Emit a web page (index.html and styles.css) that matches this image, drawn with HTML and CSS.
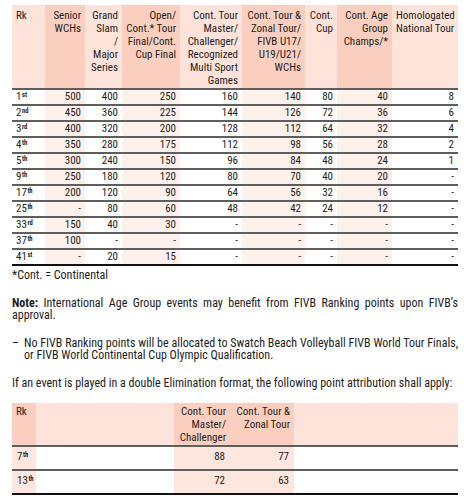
FILE: index.html
```html
<!DOCTYPE html>
<html>
<head>
<meta charset="utf-8">
<link rel="stylesheet" href="styles.css">
</head>
<body>
<div class="page">
  <table class="points main">
    <colgroup>
      <col class="w-rk"><col class="w-sen"><col class="w-gs"><col class="w-open"><col class="w-master"><col class="w-zonal"><col class="w-cup"><col class="w-age"><col class="w-nat">
    </colgroup>
    <thead>
      <tr>
        <th class="left light">Rk</th>
        <th class="dark">Senior<br>WCHs</th>
        <th class="light">Grand<br>Slam<br>/<br>Major<br>Series</th>
        <th class="dark">Open/<br>Cont.* Tour<br>Final/Cont.<br>Cup Final</th>
        <th class="light">Cont. Tour<br>Master/<br>Challenger/<br>Recognized<br>Multi Sport<br>Games</th>
        <th class="dark">Cont. Tour &amp;<br>Zonal Tour/<br>FIVB U17/<br>U19/U21/<br>WCHs</th>
        <th class="light">Cont.<br>Cup</th>
        <th class="dark">Cont. Age<br>Group<br>Champs/*</th>
        <th class="light">Homologated<br>National Tour</th>
      </tr>
    </thead>
    <tbody>
      <tr><td class="left">1<sup>st</sup></td><td class="p">500</td><td>400</td><td class="p">250</td><td>160</td><td class="p">140</td><td>80</td><td class="p">40</td><td>8</td></tr>
      <tr><td class="left">2<sup>nd</sup></td><td class="p">450</td><td>360</td><td class="p">225</td><td>144</td><td class="p">126</td><td>72</td><td class="p">36</td><td>6</td></tr>
      <tr><td class="left">3<sup>rd</sup></td><td class="p">400</td><td>320</td><td class="p">200</td><td>128</td><td class="p">112</td><td>64</td><td class="p">32</td><td>4</td></tr>
      <tr><td class="left">4<sup>th</sup></td><td class="p">350</td><td>280</td><td class="p">175</td><td>112</td><td class="p">98</td><td>56</td><td class="p">28</td><td>2</td></tr>
      <tr><td class="left">5<sup>th</sup></td><td class="p">300</td><td>240</td><td class="p">150</td><td>96</td><td class="p">84</td><td>48</td><td class="p">24</td><td>1</td></tr>
      <tr><td class="left">9<sup>th</sup></td><td class="p">250</td><td>180</td><td class="p">120</td><td>80</td><td class="p">70</td><td>40</td><td class="p">20</td><td>-</td></tr>
      <tr><td class="left">17<sup>th</sup></td><td class="p">200</td><td>120</td><td class="p">90</td><td>64</td><td class="p">56</td><td>32</td><td class="p">16</td><td>-</td></tr>
      <tr><td class="left">25<sup>th</sup></td><td class="p">-</td><td>80</td><td class="p">60</td><td>48</td><td class="p">42</td><td>24</td><td class="p">12</td><td>-</td></tr>
      <tr><td class="left">33<sup>rd</sup></td><td class="p">150</td><td>40</td><td class="p">30</td><td>-</td><td class="p">-</td><td>-</td><td class="p">-</td><td>-</td></tr>
      <tr><td class="left">37<sup>th</sup></td><td class="p">100</td><td>-</td><td class="p">-</td><td>-</td><td class="p">-</td><td>-</td><td class="p">-</td><td>-</td></tr>
      <tr class="last"><td class="left">41<sup>st</sup></td><td class="p">-</td><td>20</td><td class="p">15</td><td>-</td><td class="p">-</td><td>-</td><td class="p">-</td><td>-</td></tr>
    </tbody>
  </table>

  <p class="footnote">*Cont. = Continental</p>

  <div class="note"><span class="jline"><b>Note:</b> International Age Group events may benefit from FIVB Ranking points upon FIVB’s</span><span class="rest">approval.</span></div>

  <div class="dash-item"><span class="dash">–</span><div class="dash-text"><span class="jline">No FIVB Ranking points will be allocated to Swatch Beach Volleyball FIVB World Tour Finals,</span><span class="rest">or FIVB World Continental Cup Olympic Qualification.</span></div></div>

  <p class="intro">If an event is played in a double Elimination format, the following point attribution shall apply:</p>

  <table class="points second">
    <colgroup>
      <col class="w2-rk"><col class="w2-blank"><col class="w2-master"><col class="w2-zonal"><col class="w2-rest">
    </colgroup>
    <thead>
      <tr>
        <th class="left dark">Rk</th>
        <th class="light"></th>
        <th class="dark">Cont. Tour<br>Master/<br>Challenger</th>
        <th class="dark">Cont. Tour &amp;<br>Zonal Tour</th>
        <th class="light"></th>
      </tr>
    </thead>
    <tbody>
      <tr><td class="left q">7<sup>th</sup></td><td></td><td class="q">88</td><td class="q">77</td><td></td></tr>
      <tr class="last"><td class="left q">13<sup>th</sup></td><td></td><td class="q">72</td><td class="q">63</td><td></td></tr>
    </tbody>
  </table>
</div>
</body>
</html>
```

FILE: styles.css
```css
html, body {
  margin: 0;
  padding: 0;
  background: #ffffff;
}

body {
  font-family: "Roboto Condensed", "Roboto", "Liberation Sans", sans-serif;
  font-stretch: condensed;
  font-size: 12px;
  color: #1d1d1b;
}

.page {
  padding: 5px 12px 0 12px;
  width: 446px;
}

.points {
  border-collapse: collapse;
  table-layout: fixed;
  width: 446px;
  font-size: 11px;
}

.points th {
  font-weight: normal;
  text-align: right;
  vertical-align: top;
  white-space: nowrap;
  line-height: 13px;
  padding: 4px 4px 1px 4px;
  border-bottom: 2px solid #5e5e5e;
}

.points td {
  text-align: right;
  line-height: 14px;
  padding: 0 4px;
  border-bottom: 2px solid #5e5e5e;
}

.points tr.last td {
  border-bottom: 2px solid #111;
}

.points .left {
  text-align: left;
}

.points th.light { background: #fde3d9; }
.points th.dark { background: #fbcfbf; }
.points td.p { background: #fef0ea; }

sup {
  font-size: 6.5px;
  line-height: 1;
  vertical-align: 3px;
  font-weight: bold;
  margin-left: 0.5px;
}

.w-rk { width: 33px; }
.w-sen { width: 40px; }
.w-gs { width: 37px; }
.w-open { width: 58px; }
.w-master { width: 62px; }
.w-zonal { width: 63px; }
.w-cup { width: 32px; }
.w-age { width: 55px; }
.w-nat { width: 66px; }

.footnote {
  margin: 3px 0 0;
  line-height: 13px;
}

.note {
  margin: 15px 0 0;
  line-height: 12px;
}

.jline {
  display: block;
  text-align: justify;
  text-align-last: justify;
}

.rest {
  display: block;
}

.note b {
  font-weight: bold;
}

.dash-item {
  display: flex;
  margin-top: 16px;
  line-height: 12px;
}

.dash-item .dash {
  flex: 0 0 12px;
}

.dash-text {
  flex: 1;
}

.intro {
  margin: 16px 0 0;
  line-height: 12px;
  white-space: nowrap;
}

.second {
  margin-top: 14px;
}

.second th {
  padding: 2px 4px 1px 4px;
}

.second td {
  padding: 3px 5px 6px 4px;
  line-height: 13px;
}

.second td.left {
  padding-left: 5px;
}

.second td.q { background: #fde6dd; }

.w2-rk { width: 24px; }
.w2-blank { width: 138px; }
.w2-master { width: 56px; }
.w2-zonal { width: 64px; }
.w2-rest { width: 164px; }
```
